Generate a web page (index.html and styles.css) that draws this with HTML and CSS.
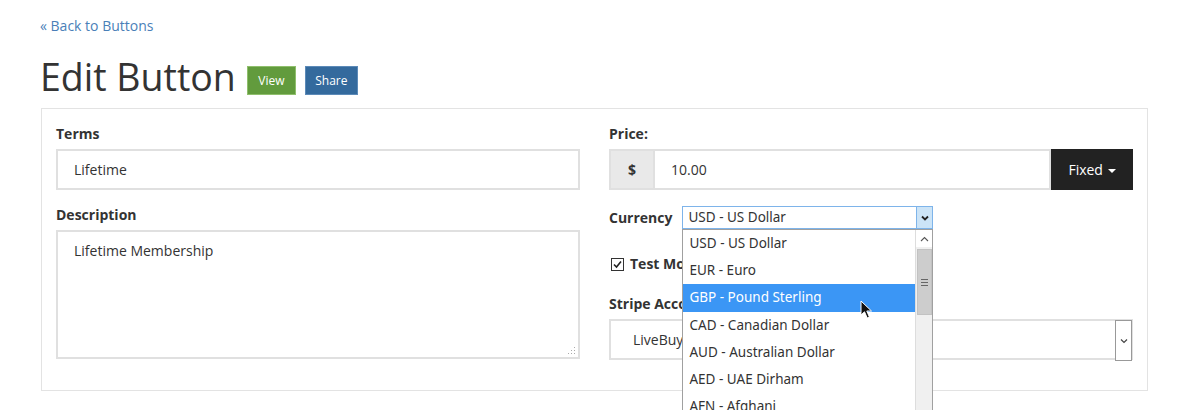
FILE: index.html
```html
<!DOCTYPE html>
<html>
<head>
<meta charset="utf-8">
<link rel="stylesheet" href="styles.css">
</head>
<body>
<div class="page">
  <a class="back" href="#">« Back to Buttons</a>
  <div class="title-row">
    <h1>Edit Button</h1>
    <span class="btn btn-view">View</span>
    <span class="btn btn-share">Share</span>
  </div>
  <div class="panel">
    <div class="col">
      <div class="field">
        <label class="lbl">Terms</label>
        <div class="input">Lifetime</div>
      </div>
      <div class="field">
        <label class="lbl">Description</label>
        <div class="input textarea">Lifetime Membership
          <svg class="grip" width="8" height="8" viewBox="0 0 8 8"><g fill="#aaa"><rect x="6" y="0" width="1" height="1"/><rect x="6" y="3" width="1" height="1"/><rect x="6" y="6" width="1" height="1"/><rect x="3" y="3" width="1" height="1"/><rect x="3" y="6" width="1" height="1"/><rect x="0" y="6" width="1" height="1"/></g></svg>
        </div>
      </div>
    </div>
    <div class="col">
      <div class="field">
        <label class="lbl">Price:</label>
        <div class="group">
          <span class="addon">$</span>
          <div class="input grow">10.00</div>
          <span class="fixed">Fixed <span class="caret"></span></span>
        </div>
      </div>
      <div class="currency-row">
        <label class="lbl inline">Currency</label>
        <div class="select-wrap">
          <div class="mini-select">
            <span class="ms-text">USD - US Dollar</span>
            <span class="ms-arrow"><svg width="8" height="6" viewBox="0 0 8 6"><path d="M1 1.5 L4 4.5 L7 1.5" fill="none" stroke="#222" stroke-width="1.8"/></svg></span>
          </div>
          <div class="dropdown">
            <ul class="options">
              <li>USD - US Dollar</li>
              <li>EUR - Euro</li>
              <li class="sel">GBP - Pound Sterling</li>
              <li>CAD - Canadian Dollar</li>
              <li>AUD - Australian Dollar</li>
              <li>AED - UAE Dirham</li>
              <li>AFN - Afghani</li>
            </ul>
            <div class="scrollbar">
              <div class="sb-up"><svg width="9" height="6" viewBox="0 0 9 6"><path d="M1 5 L4.5 1.5 L8 5" fill="none" stroke="#555" stroke-width="1.1"/></svg></div>
              <div class="sb-thumb"><span></span><span></span><span></span></div>
            </div>
          </div>
          <svg class="cursor" width="14" height="20" viewBox="0 0 14 20"><path d="M1 1 L1 15 L4.5 11.8 L7.2 18 L9.4 17 L6.8 11 L11.5 11 Z" fill="#111" stroke="#fff" stroke-width="1"/></svg>
        </div>
      </div>
      <div class="check-row">
        <span class="checkbox"><svg width="11" height="11" viewBox="0 0 11 11"><path d="M2 5.5 L4.5 8 L9 2.5" fill="none" stroke="#222" stroke-width="1.6"/></svg></span>
        <span class="lbl">Test Mode</span>
      </div>
      <div class="field stripe">
        <label class="lbl">Stripe Account</label>
        <div class="input select">LiveBuy
          <span class="sel-arrow"><svg width="8" height="6" viewBox="0 0 8 6"><path d="M1 1.5 L4 4.5 L7 1.5" fill="none" stroke="#444" stroke-width="1.2"/></svg></span>
        </div>
      </div>
    </div>
  </div>
</div>
</body>
</html>
```

FILE: styles.css
```css
* { box-sizing: border-box; }
html, body { overflow: hidden; }
body {
  margin: 0;
  font-family: "Open Sans", "Noto Sans", sans-serif;
  font-size: 14px;
  color: #333;
  background: #fff;
  height: 410px;
}
.page {
  padding: 16px 52px 0 40px;
}
.back {
  display: block;
  color: #4a7fb8;
  text-decoration: none;
  font-size: 14px;
  line-height: 20px;
}
.title-row {
  display: flex;
  align-items: center;
  margin-top: 18px;
  height: 46px;
}
h1 {
  margin: 0;
  font-weight: 400;
  font-size: 37.5px;
  line-height: 46px;
  color: #333;
}
.btn {
  display: inline-flex;
  align-items: center;
  justify-content: center;
  height: 29px;
  color: #fff;
  font-size: 12px;
  padding: 0 9px;
  margin-top: 7px;
}
.btn-view {
  background: #629b3d;
  border: 1px solid #8fbf6c;
  margin-left: 11px;
  width: 49px;
}
.btn-share {
  background: #346a9d;
  border: 1px solid #5c8ab8;
  margin-left: 9px;
  width: 53px;
}
.panel {
  margin-top: 8px;
  margin-left: 1px;
  border: 1px solid #e3e3e3;
  height: 283px;
  padding: 15px 14px 0 14px;
  display: grid;
  grid-template-columns: 524px 524px;
  column-gap: 29px;
}
.col { display: flex; flex-direction: column; }
.lbl {
  display: block;
  font-weight: 700;
  font-size: 14px;
  line-height: 20px;
  color: #333;
  margin-bottom: 5px;
}
.field { margin-bottom: 15px; }
.input {
  height: 41px;
  border: 2px solid #e0e0e0;
  padding: 0 16px;
  line-height: 38px;
  font-size: 14px;
  color: #333;
  background: #fff;
}
.textarea {
  height: 129px;
  line-height: 20px;
  padding-top: 9px;
  position: relative;
}
.grip { position: absolute; right: 2px; bottom: 2px; }
.group { display: flex; height: 41px; }
.addon {
  width: 44px;
  background: #e9e9e9;
  border: 2px solid #e0e0e0;
  border-right: none;
  font-weight: 700;
  text-align: center;
  line-height: 38px;
}
.grow { flex: 1; }
.fixed {
  width: 82px;
  background: #222;
  color: #fff;
  line-height: 41px;
  text-align: center;
  font-size: 14px;
}
.caret {
  display: inline-block;
  width: 0; height: 0;
  border-left: 4px solid transparent;
  border-right: 4px solid transparent;
  border-top: 4px solid #fff;
  vertical-align: middle;
  margin-left: 1px;
}
.currency-row {
  display: flex;
  align-items: center;
  height: 23px;
  margin-top: 1px;
}
.lbl.inline { margin: 0 8px 0 0; }
.select-wrap { position: relative; margin-left: 2px; }
.mini-select {
  width: 251px;
  height: 23px;
  border: 1px solid #7eb4ea;
  display: flex;
  align-items: stretch;
  font-family: "Noto Sans", sans-serif;
  font-size: 13.5px;
  color: #333;
}
.ms-text { flex: 1; padding-left: 5px; line-height: 21px; }
.ms-arrow {
  width: 16px;
  background: #cce4f7;
  border-left: 1px solid #7eb4ea;
  display: flex; align-items: center; justify-content: center;
}
.dropdown {
  position: absolute;
  left: 0;
  top: 23px;
  width: 251px;
  height: 181px;
  overflow: hidden;
  background: #fff;
  border: 1px solid #a0a0a0;
  border-bottom: none;
  display: flex;
  z-index: 5;
}
.options {
  list-style: none;
  margin: 0;
  padding: 0;
  flex: 1;
  font-family: "Noto Sans", sans-serif;
  font-size: 13.5px;
  color: #333;
}
.options li {
  height: 27.2px;
  line-height: 27px;
  padding-left: 6px;
}
.options li.sel { background: #3b96f5; color: #fff; }
.scrollbar {
  width: 17px;
  background: #f0f0f0;
  border-left: 1px solid #ddd;
  display: flex;
  flex-direction: column;
  align-items: center;
}
.sb-up {
  height: 17px;
  width: 17px;
  display: flex; align-items: center; justify-content: center;
  background: #fff;
}
.sb-thumb {
  width: 15px;
  height: 66px;
  margin-top: 2px;
  background: #cdcdcd;
  border: 1px solid #c2c2c2;
  display: flex;
  flex-direction: column;
  align-items: center;
  justify-content: center;
  gap: 2px;
}
.sb-thumb span { display: block; width: 7px; height: 1px; background: #666; }
.cursor { position: absolute; left: 178px; top: 94px; z-index: 6; }
.check-row {
  display: flex;
  align-items: center;
  margin-top: 25px;
  height: 20px;
}
.checkbox {
  width: 13px; height: 13px;
  border: 1px solid #333;
  margin: 0 6px 0 2px;
  display: flex; align-items: center; justify-content: center;
  background: #fff;
}
.check-row .lbl { margin: 0; }
.stripe { margin-top: 20px; }
.select { position: relative; padding-left: 22px; }
.sel-arrow {
  position: absolute;
  right: -1px; top: -1px;
  width: 17px; height: 41px;
  border: 1px solid #999;
  background: #fff;
  display: flex; align-items: center; justify-content: center;
}
```
